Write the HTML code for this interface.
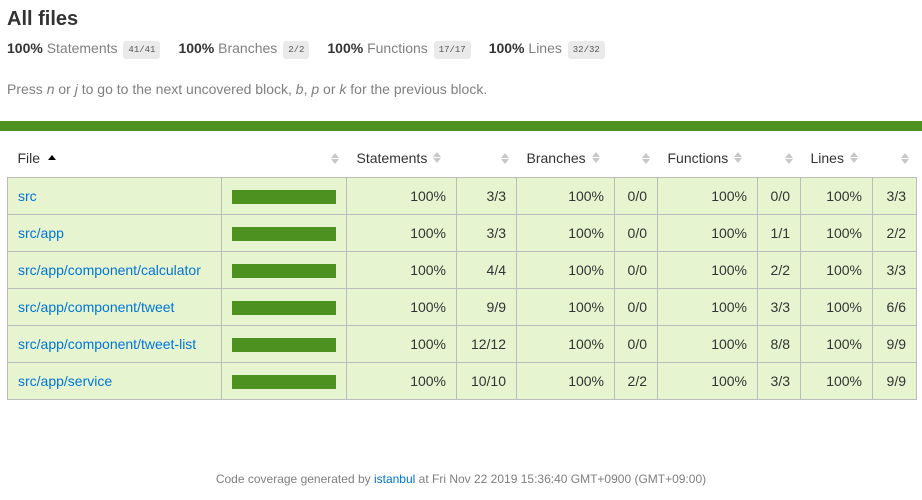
<!DOCTYPE html>
<html><head><meta charset="utf-8"><style>
body{margin:0;font-family:"Liberation Sans",Arial,sans-serif;font-size:14px;color:#333;background:#fff;width:922px;height:500px;overflow:hidden;position:relative}
h1{font-size:20px;margin:0;position:absolute;left:7px;top:8px;font-weight:bold}
.sum{position:absolute;left:7px;top:40px;font-size:14px;white-space:nowrap}
.sum span.i{margin-right:18px}
.sum b{color:#333}
.sum .l{color:#7f7f7f}
.fr{display:inline-block;background:#eaeaea;border-radius:3px;font-family:"Liberation Mono",monospace;font-size:9px;padding:4px 5px;color:#555;vertical-align:1px;margin-left:2px}
.q{position:absolute;left:7px;top:81px;color:#7f7f7f}
.bar{position:absolute;left:0;top:121px;width:922px;height:10px;background:#4d9221}
table{position:absolute;left:7px;top:146px;border-collapse:collapse;table-layout:fixed;width:909px}
th{font-weight:normal;text-align:left;padding:4px 0 0 10px;height:31px;box-sizing:border-box;vertical-align:top;line-height:16px;position:relative;color:#333}
td{border:1px solid #bbb;background:#e6f5d0;height:37px;padding:0 10px;text-align:right;box-sizing:border-box}
td.f{text-align:left;color:#0074d9}
.g{display:inline-block;width:104px;height:14px;background:#4d9221;vertical-align:middle}
td.c{text-align:left;padding-left:10px}
.s{position:absolute;right:8px;top:6px;width:8px;height:14px}
.s:before,.s:after{content:"";position:absolute;left:0;border-left:4px solid transparent;border-right:4px solid transparent}
.s:before{top:1px;border-bottom:5px solid #c8c8c8}
.s:after{top:7px;border-top:5px solid #c8c8c8}
.s2{position:relative;display:inline-block;width:8px;height:14px;vertical-align:-2px;margin-left:6px}
.s2:before,.s2:after{content:"";position:absolute;left:0;border-left:4px solid transparent;border-right:4px solid transparent}
.s2:before{top:1px;border-bottom:5px solid #c8c8c8}
.s2:after{top:7px;border-top:5px solid #c8c8c8}
.up{display:inline-block;border-left:4px solid transparent;border-right:4px solid transparent;border-bottom:5px solid #000;margin-left:8px;vertical-align:3px}
.foot{position:absolute;top:472px;left:0;width:922px;text-align:center;font-size:12px;color:#7f7f7f}
.foot a{color:#0074d9}
</style></head><body>
<h1>All files</h1>
<div class="sum"><span class="i"><b>100%</b> <span class="l">Statements</span> <span class="fr">41/41</span></span><span class="i"><b>100%</b> <span class="l">Branches</span> <span class="fr">2/2</span></span><span class="i"><b>100%</b> <span class="l">Functions</span> <span class="fr">17/17</span></span><span class="i"><b>100%</b> <span class="l">Lines</span> <span class="fr">32/32</span></span></div>
<div class="q">Press <i>n</i> or <i>j</i> to go to the next uncovered block, <i>b</i>, <i>p</i> or <i>k</i> for the previous block.</div>
<div class="bar"></div>
<table>
<colgroup><col style="width:214px"><col style="width:125px"><col style="width:110px"><col style="width:60px"><col style="width:98px"><col style="width:43px"><col style="width:100px"><col style="width:43px"><col style="width:72px"><col style="width:44px"></colgroup>
<tr><th>File<span class="up"></span></th><th><span class="s"></span></th><th>Statements<span class="s2"></span></th><th><span class="s"></span></th><th>Branches<span class="s2"></span></th><th><span class="s"></span></th><th>Functions<span class="s2"></span></th><th><span class="s"></span></th><th>Lines<span class="s2"></span></th><th><span class="s"></span></th></tr>
<tr><td class="f">src</td><td class="c"><span class="g"></span></td><td>100%</td><td>3/3</td><td>100%</td><td>0/0</td><td>100%</td><td>0/0</td><td>100%</td><td>3/3</td></tr>
<tr><td class="f">src/app</td><td class="c"><span class="g"></span></td><td>100%</td><td>3/3</td><td>100%</td><td>0/0</td><td>100%</td><td>1/1</td><td>100%</td><td>2/2</td></tr>
<tr><td class="f">src/app/component/calculator</td><td class="c"><span class="g"></span></td><td>100%</td><td>4/4</td><td>100%</td><td>0/0</td><td>100%</td><td>2/2</td><td>100%</td><td>3/3</td></tr>
<tr><td class="f">src/app/component/tweet</td><td class="c"><span class="g"></span></td><td>100%</td><td>9/9</td><td>100%</td><td>0/0</td><td>100%</td><td>3/3</td><td>100%</td><td>6/6</td></tr>
<tr><td class="f">src/app/component/tweet-list</td><td class="c"><span class="g"></span></td><td>100%</td><td>12/12</td><td>100%</td><td>0/0</td><td>100%</td><td>8/8</td><td>100%</td><td>9/9</td></tr>
<tr><td class="f">src/app/service</td><td class="c"><span class="g"></span></td><td>100%</td><td>10/10</td><td>100%</td><td>2/2</td><td>100%</td><td>3/3</td><td>100%</td><td>9/9</td></tr>
</table>
<div class="foot">Code coverage generated by <a>istanbul</a> at Fri Nov 22 2019 15:36:40 GMT+0900 (GMT+09:00)</div>
</body></html>
